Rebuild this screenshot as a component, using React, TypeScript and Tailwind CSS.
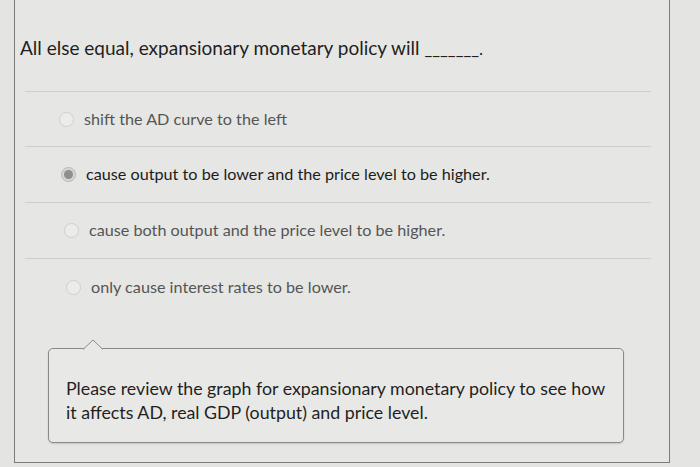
const options = [
  { text: "shift the AD curve to the left", selected: false, indent: "pl-[34px]" },
  { text: "cause output to be lower and the price level to be higher.", selected: true, indent: "pl-[36px]" },
  { text: "cause both output and the price level to be higher.", selected: false, indent: "pl-[39px]" },
  { text: "only cause interest rates to be lower.", selected: false, indent: "pl-[41px]" },
];

const Radio = ({ selected }: { selected: boolean }) =>
  selected ? (
    <span className="flex h-[15px] w-[15px] shrink-0 items-center justify-center rounded-full border border-[#b9b9b7] bg-[#d6d6d4]">
      <span className="h-[9px] w-[9px] rounded-full bg-[#8f8f8e]" />
    </span>
  ) : (
    <span className="h-[15px] w-[15px] shrink-0 rounded-full border border-[#cfcfcd] bg-[#ececea]" />
  );

export default function App() {
  return (
    <div
      className="h-[467px] w-[700px] overflow-hidden bg-[#e4e5e2] pl-[14px]"
      style={{ fontFamily: "Lato, 'Open Sans', sans-serif" }}
    >
      <div className="flex h-[463px] w-[656px] flex-col border-r border-b border-l border-[#7c7c7a] bg-[#e6e7e4]">
        <p className="pt-[36px] pl-[5px] text-[19px] leading-[24px] text-[#1f1f1f]">
          All else equal, expansionary monetary policy will <span className="text-[17px]">_______.</span>
        </p>

        <ul className="mt-[30px] mr-[18px] ml-[10px] flex flex-col">
          {options.map((o, i) => (
            <li
              key={i}
              className={`flex h-[56px] items-center gap-[10px] ${o.indent} ${i === 0 ? "border-t" : ""} ${
                i < options.length - 1 ? "border-b" : ""
              } border-[#cfd0cd]`}
            >
              <Radio selected={o.selected} />
              <span className={`text-[16.2px] ${o.selected ? "text-[#1c1c1c]" : "text-[#555]"}`}>
                {o.text}
              </span>
            </li>
          ))}
        </ul>

        <div className="relative mt-[33px] ml-[33px] w-[576px] rounded-[5px] border border-[#8a8a88] bg-[#e8e9e6] px-[17px] pt-[27px] pb-[18px] shadow-[0_1px_2px_rgba(0,0,0,0.15)]">
          <svg
            className="absolute -top-[10px] left-[34px]"
            width="20"
            height="11"
            viewBox="0 0 20 11"
          >
            <path d="M0 10.5 L10 1 L20 10.5" fill="#e8e9e6" stroke="#8a8a88" strokeWidth="1" />
          </svg>
          <p className="whitespace-nowrap text-[17.8px] leading-[24px] text-[#1f1f1f]">
            Please review the graph for expansionary monetary policy to see how
            <br />
            it affects AD, real GDP (output) and price level.
          </p>
        </div>
      </div>
    </div>
  );
}
